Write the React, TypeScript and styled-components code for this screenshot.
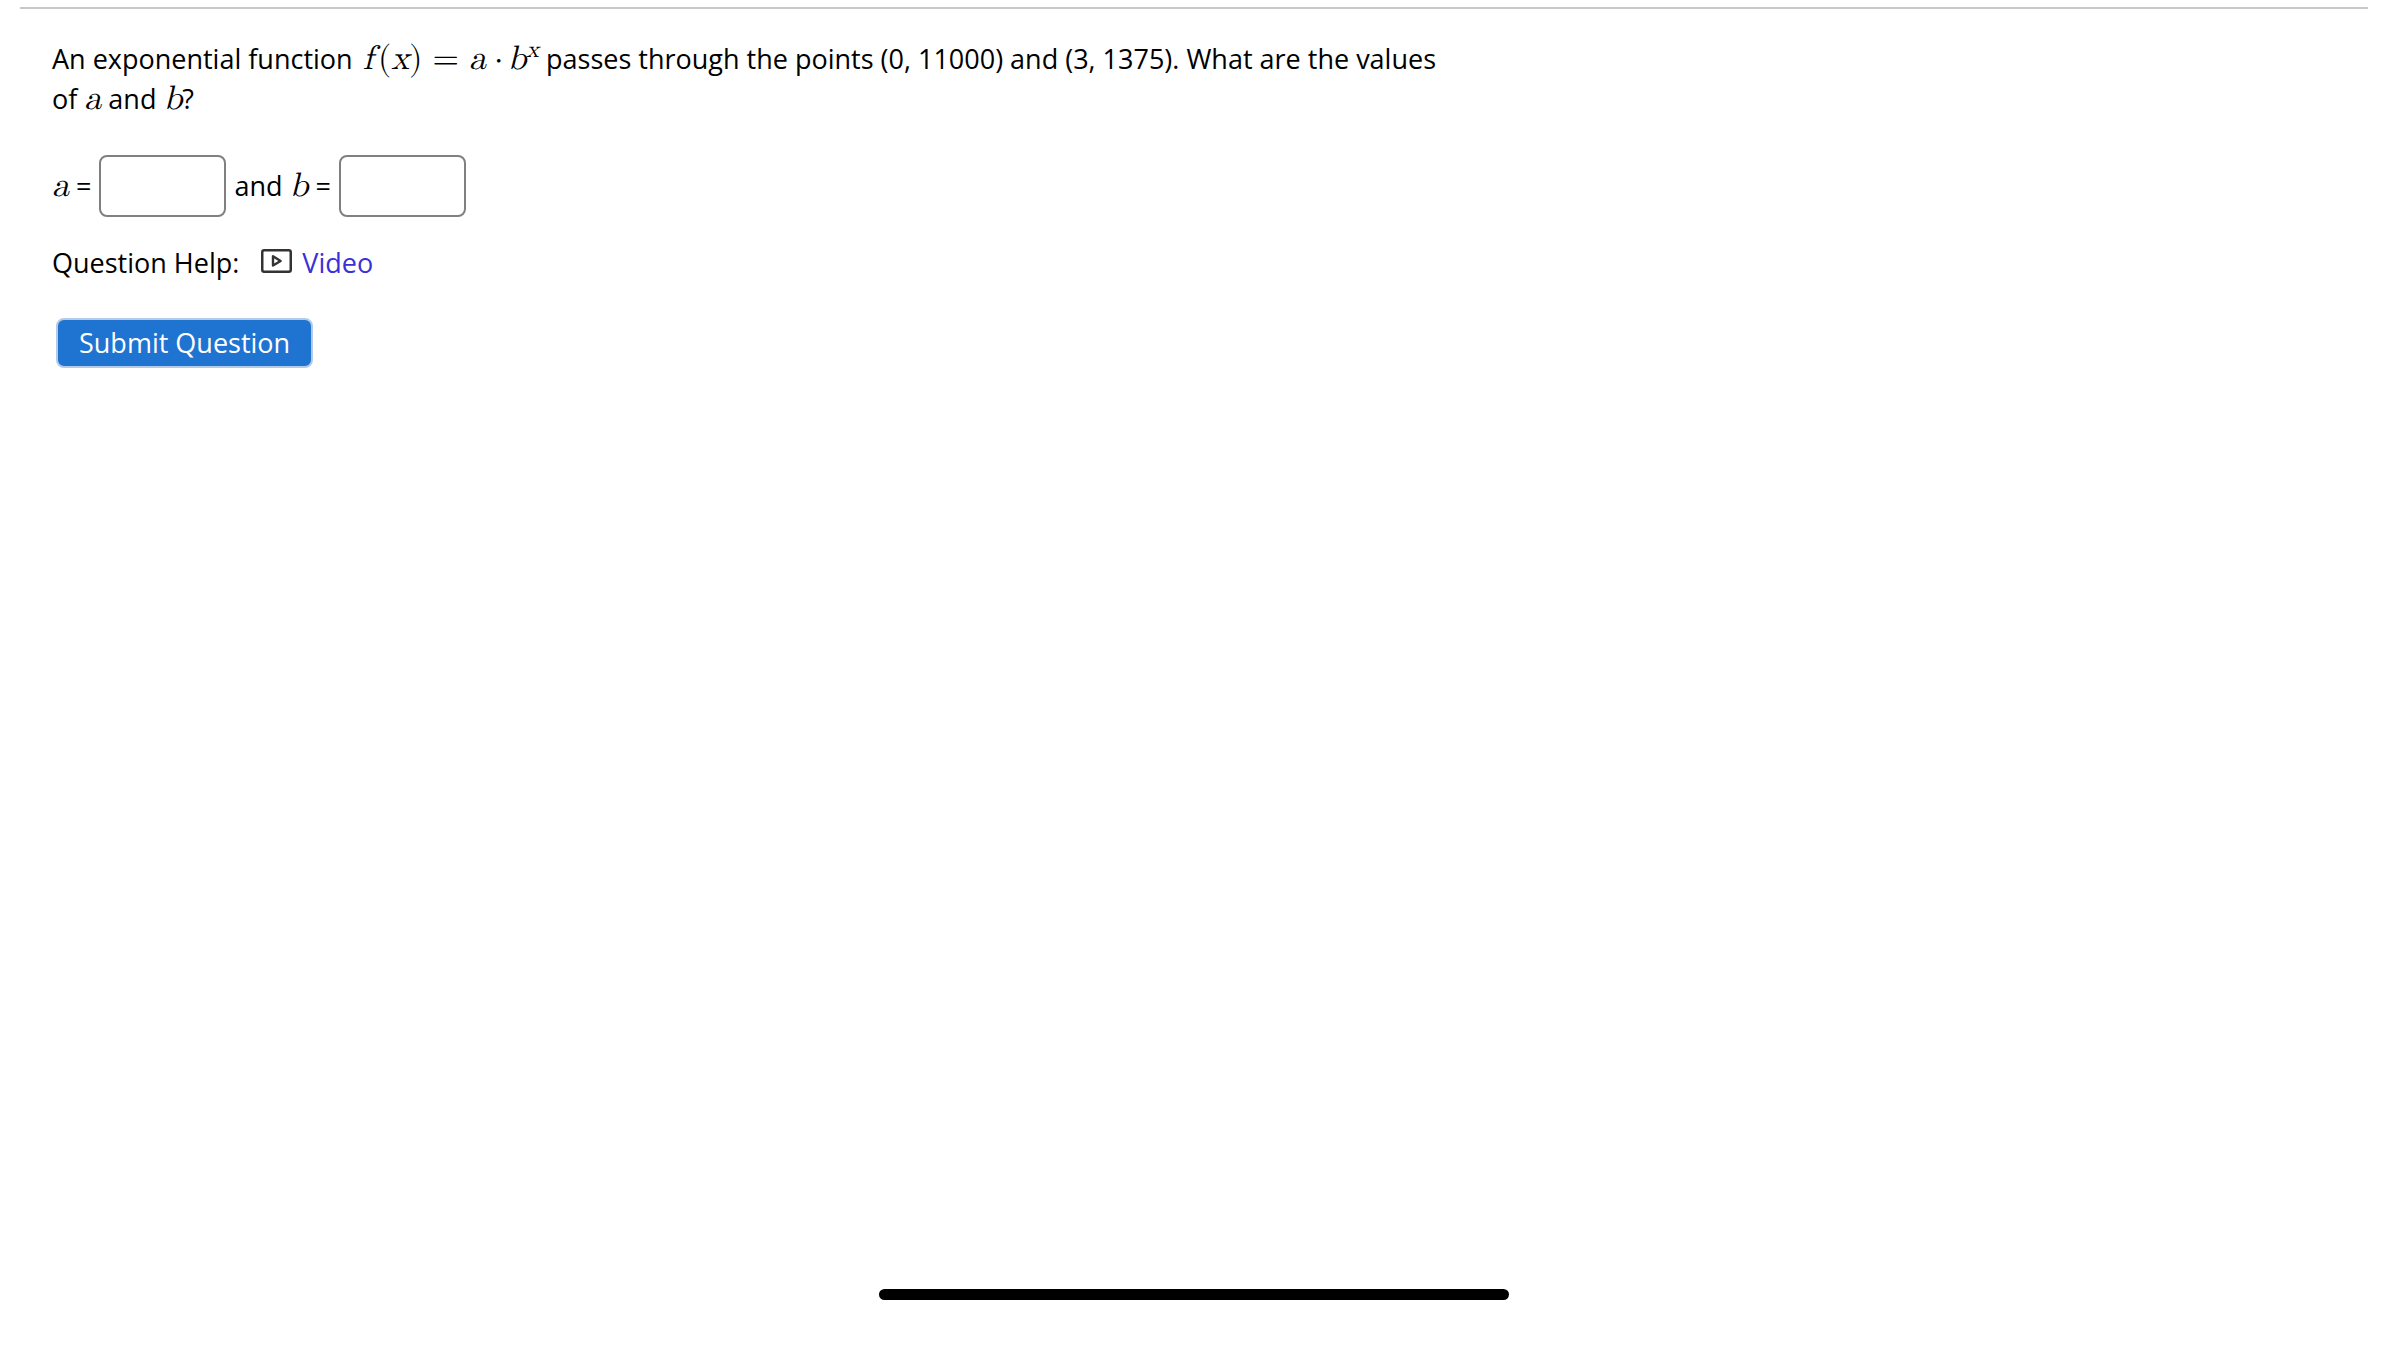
import React from "react";
import styled, { createGlobalStyle } from "styled-components";

const GlobalStyle = createGlobalStyle`
  * {
    box-sizing: border-box;
  }
  body {
    margin: 0;
    background: #fff;
    color: #000;
    font: 27px/40px "Trebuchet MS", "Open Sans", sans-serif;
  }
`;

const Page = styled.div`
  display: flex;
  flex-direction: column;
  min-height: 100vh;
  padding: 7px 20px 51px;
`;

const Question = styled.main`
  flex: 1;
  border-top: 2px solid #c8c8c8;
  padding: 30px 32px;
`;

const Prompt = styled.p`
  max-width: 1400px;
  margin: 0;
`;

const Formula = styled.span`
  margin-left: 3px;
  white-space: nowrap;
  line-height: 1;
  font-family: "Latin Modern Math", "Liberation Serif", serif;
  font-size: 34px;
`;

const FunctionName = styled.i`
  margin-right: 5px;
`;

const Variable = styled.i`
  font-family: "Latin Modern Math", "Liberation Serif", serif;
  font-size: 34px;
  line-height: 1;
`;

const Equals = styled.span`
  margin: 0 10px;
`;

const Times = styled.span`
  margin: 0 4px 0 8px;
`;

const Exponent = styled.sup`
  font-size: 24px;
  font-style: italic;
  line-height: 0;
`;

const Answers = styled.div`
  display: flex;
  align-items: center;
  gap: 8px;
  margin-top: 36px;
`;

const AnswerInput = styled.input`
  width: 127px;
  height: 62px;
  padding: 6px 10px;
  border: 2px solid #808080;
  border-radius: 8px;
  background: #fff;
  font: inherit;
`;

const Help = styled.div`
  display: flex;
  align-items: center;
  gap: 22px;
  margin-top: 26px;
`;

const VideoLink = styled.a`
  display: flex;
  align-items: center;
  gap: 10px;
  color: #3a30d8;
  text-decoration: none;

  svg {
    margin-bottom: 4px;
  }
`;

const SubmitButton = styled.button`
  margin: 35px 0 0 4px;
  padding: 3px 21px;
  border: 2px solid #b4cbe8;
  border-radius: 8px;
  background: #1f74d1;
  color: #fff;
  font: inherit;
`;

const HomeIndicator = styled.div`
  align-self: center;
  width: 27%;
  max-width: 630px;
  height: 11px;
  border-radius: 6px;
  background: #000;
`;

function VideoIcon() {
  return (
    <svg width="31" height="24" viewBox="0 0 31 24" fill="none" stroke="#333" aria-hidden="true">
      <rect x="1.25" y="1.25" width="28.5" height="21.5" rx="2" strokeWidth="2.5" />
      <path d="M12 7.2v9.4l7.6-4.7z" strokeWidth="2.4" strokeLinejoin="round" />
    </svg>
  );
}

export default function App() {
  return (
    <>
      <GlobalStyle />
      <Page>
        <Question>
          <Prompt>
            An exponential function{" "}
            <Formula>
              <FunctionName>f</FunctionName>(<i>x</i>)<Equals>=</Equals>
              <i>a</i>
              <Times>·</Times>
              <i>b</i>
              <Exponent>x</Exponent>
            </Formula>{" "}
            passes through the points (0, 11000) and (3, 1375). What are the values of{" "}
            <Variable>a</Variable> and <Variable>b</Variable>?
          </Prompt>
          <Answers>
            <label htmlFor="answer-a">
              <Variable>a</Variable> =
            </label>
            <AnswerInput id="answer-a" type="text" />
            <label htmlFor="answer-b">
              and <Variable>b</Variable> =
            </label>
            <AnswerInput id="answer-b" type="text" />
          </Answers>
          <Help>
            <span>Question Help:</span>
            <VideoLink href="#video">
              <VideoIcon />
              Video
            </VideoLink>
          </Help>
          <SubmitButton type="button">Submit Question</SubmitButton>
        </Question>
        <HomeIndicator />
      </Page>
    </>
  );
}
